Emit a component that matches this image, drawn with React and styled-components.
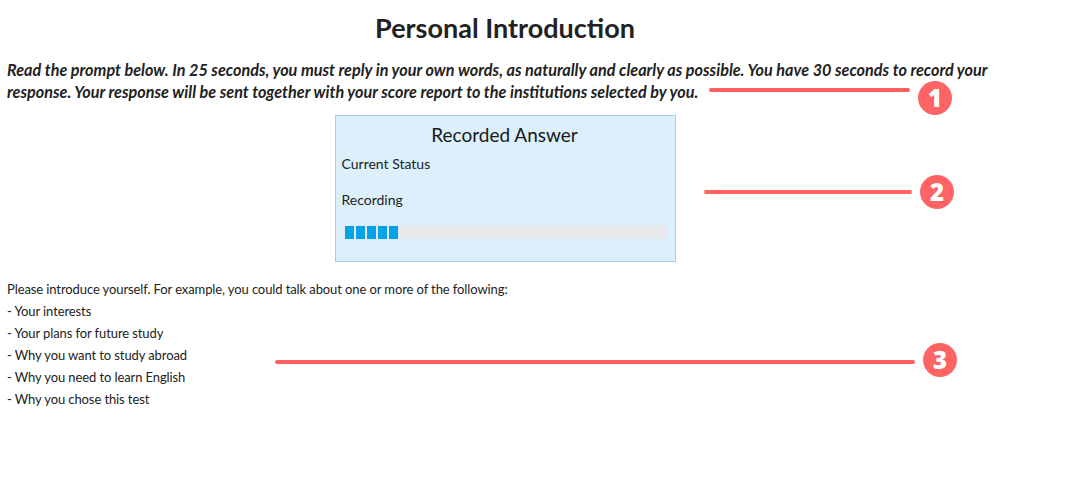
import styled, { createGlobalStyle } from "styled-components";

const Global = createGlobalStyle`
  body {
    margin: 0;
    background: #ffffff;
    font-family: Lato, "Open Sans", sans-serif;
    color: #222222;
  }
`

export default function App() {
  const items = [
    "- Your interests",
    "- Your plans for future study",
    "- Why you want to study abroad",
    "- Why you need to learn English",
    "- Why you chose this test",
  ]

  return (
    <>
      <Global />
      <Page>
        <Centered>
          <Title>Personal Introduction</Title>
        </Centered>
        <Instructions>
          Read the prompt below. In 25 seconds, you must reply in your own words, as naturally and clearly as possible. You have 30 seconds to record your response. Your response will be sent together with your score report to the institutions selected by you.
        </Instructions>

        <Centered>
          <Recorder>
            <RecorderTitle>Recorded Answer</RecorderTitle>
            <Label>Current Status</Label>
            <Label $gap={18}>Recording</Label>
            <Progress>
              {[0, 1, 2, 3, 4].map((i) => (
                <Segment key={i} />
              ))}
            </Progress>
          </Recorder>
        </Centered>

        <Prompt>
          <div>Please introduce yourself. For example, you could talk about one or more of the following:</div>
          {items.map((t) => (
            <div key={t}>{t}</div>
          ))}
        </Prompt>

        <Pointer $top={81} $left={709}>
          <Line $width={201} $shift={-8} />
          <Badge>1</Badge>
        </Pointer>
        <Pointer $top={175} $left={704}>
          <Line $width={208} />
          <Badge>2</Badge>
        </Pointer>
        <Pointer $top={343} $left={275}>
          <Line $width={640} $shift={2} />
          <Badge>3</Badge>
        </Pointer>
      </Page>
    </>
  )
}

const Page = styled.div`
  position: relative;
  width: 1092px;
  min-height: 489px;
  padding: 12px 7px 0;
  box-sizing: border-box;
`

const Centered = styled.div`
  width: 996px;
  display: flex;
  justify-content: center;
`

const Title = styled.h1`
  margin: 0;
  font-size: 27px;
  font-weight: 700;
  line-height: 32px;
  color: #222222;
`

const Instructions = styled.p`
  margin: 15px 0 0;
  width: 1020px;
  font-size: 16.2px;
  font-weight: 700;
  font-style: italic;
  line-height: 22px;
  color: #222222;
`

const Recorder = styled.div`
  width: 341px;
  height: 147px;
  box-sizing: border-box;
  margin-top: 12px;
  padding: 8px 7px 0 6px;
  display: flex;
  flex-direction: column;
  background: #dcf0fc;
  border: 1px solid #a9cfe6;
`

const RecorderTitle = styled.div`
  text-align: center;
  font-size: 19px;
  line-height: 22px;
  color: #1a1a1a;
`

const Label = styled.div`
  margin-top: ${(p) => p.$gap || 9}px;
  font-size: 14px;
  line-height: 18px;
  color: #222222;
`

const Progress = styled.div`
  display: flex;
  gap: 2px;
  height: 14px;
  margin: 16px 0 0 1px;
  padding: 1px 2px 0;
  box-sizing: border-box;
  background: #e6e8ea;
  border-radius: 4px;
`

const Segment = styled.div`
  width: 9px;
  height: 13px;
  background: #00a2e8;
`

const Prompt = styled.div`
  margin-top: 16px;
  font-size: 13px;
  letter-spacing: -0.1px;
  line-height: 22px;
  color: #222222;
`

const Pointer = styled.div`
  position: absolute;
  top: ${(p) => p.$top}px;
  left: ${(p) => p.$left}px;
  display: flex;
  align-items: center;
  gap: 8px;
`

const Line = styled.div`
  width: ${(p) => p.$width}px;
  height: 4px;
  margin-top: ${(p) => (p.$shift || 0) * 2}px;
  border-radius: 2px;
  background: #ff6060;
`

const Badge = styled.div`
  width: 34px;
  height: 34px;
  border-radius: 50%;
  background: #ff6464;
  color: #ffffff;
  font-family: "Open Sans", sans-serif;
  font-weight: 800;
  font-size: 24px;
  line-height: 34px;
  text-align: center;
`
